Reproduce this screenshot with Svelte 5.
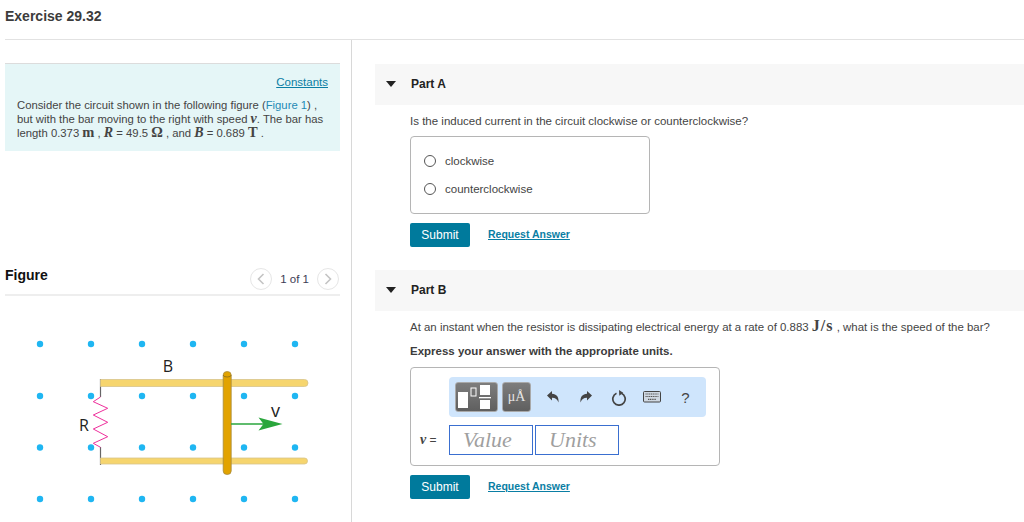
<script>
  const dotX = [40, 91, 142, 193, 244, 295]
  const dotY = [344, 396, 447.5, 499]
  const parts = ['clockwise', 'counterclockwise']
</script>

<div class="page">
  <header class="title">Exercise 29.32</header>

  <div class="columns">
    <aside class="left">
      <div class="intro">
        <a class="constants" href="#c">Constants</a>
        <p>
          Consider the circuit shown in the following figure (<span class="fig-link">Figure 1</span>) ,<br />
          but with the bar moving to the right with speed <b class="var">v</b>. The bar has<br />
          length 0.373 <b class="unit">m</b> , <b class="var">R</b> = 49.5 <b class="unit">Ω</b> , and <b class="var">B</b> = 0.689 <b class="unit">T</b> .
        </p>
      </div>

      <div class="fig-head">
        <h2>Figure</h2>
        <div class="pager">
          <span class="circle">
            <svg width="8" height="12" viewBox="0 0 8 12"><path d="M6.5 1 L1.5 6 L6.5 11" fill="none" stroke="#c4c4c4" stroke-width="1.6"/></svg>
          </span>
          <span class="count">1 of 1</span>
          <span class="circle">
            <svg width="8" height="12" viewBox="0 0 8 12"><path d="M1.5 1 L6.5 6 L1.5 11" fill="none" stroke="#c4c4c4" stroke-width="1.6"/></svg>
          </span>
        </div>
      </div>

      <svg class="figure" width="346" height="226" viewBox="0 296 346 226">
        {#each dotY as y}
          {#each dotX as x}
            <circle cx={x} cy={y} r="3.2" fill="#1fb6f2" />
          {/each}
        {/each}
        <path d="M100.5 379 V397" stroke="#666" stroke-width="1.2" fill="none"/>
        <path d="M100.5 447 V465" stroke="#666" stroke-width="1.2" fill="none"/>
        <path d="M100.5 397 L93.3 401.700 L107.700 408.300 L93.3 415 L107.700 422.300 L93.3 429 L107.700 436.700 L93.3 443.300 L100.5 447.300" stroke="#ee2f9c" stroke-width="1" fill="none"/>
        <path d="M100.5 379.500 H304.500 a3.500 3.500 0 0 1 0 7 H100.5 Z" fill="#f6d56e" stroke="#d8c48a" stroke-width="0.8"/>
        <path d="M100.5 458 H304.500 a3 3 0 0 1 0 6 H100.5 Z" fill="#f6d56e" stroke="#d8c48a" stroke-width="0.8"/>
        <path d="M223.200 375 a4 3.500 0 0 1 8 0 V471 a4 3.500 0 0 1 -8 0 Z" fill="#e2a300" stroke="#a78a3c" stroke-width="0.8"/>
        <path d="M223.200 375 a4 2 0 0 0 8 0" fill="none" stroke="#7d6420" stroke-width="0.7"/>
        <path d="M231 424 H264" stroke="#2aa63c" stroke-width="1.6"/>
        <path d="M282.500 424 L258.500 417.500 L263.500 424 L258.500 430.500 Z" fill="#2aa63c"/>
        <text x="168" y="372" class="label">B</text>
        <text x="84" y="431" class="label">R</text>
        <text x="275.500" y="417" class="label big">v</text>
      </svg>
    </aside>

    <main class="right">
      <section class="part">
        <div class="part-head"><span class="tri"></span><h3>Part A</h3></div>
        <div class="part-body">
          <p class="question">Is the induced current in the circuit clockwise or counterclockwise?</p>
          <div class="choices">
            {#each parts as choice}
              <label class="choice"><span class="radio"></span>{choice}</label>
            {/each}
          </div>
          <div class="actions">
            <button>Submit</button>
            <a href="#r">Request Answer</a>
          </div>
        </div>
      </section>

      <section class="part part-b">
        <div class="part-head"><span class="tri"></span><h3>Part B</h3></div>
        <div class="part-body">
          <p class="question q-b">At an instant when the resistor is dissipating electrical energy at a rate of 0.883 <b class="unit wide">J/s</b> , what is the speed of the bar?</p>
          <p class="express">Express your answer with the appropriate units.</p>
          <div class="answer">
            <div class="toolbar">
              <span class="tool tool-tpl">
                <svg width="38" height="26" viewBox="0 0 38 26">
                  <rect x="0" y="8" width="10" height="16" fill="#fff"/>
                  <rect x="13" y="4" width="5" height="8" fill="none" stroke="#fff" stroke-width="1"/>
                  <rect x="22" y="1" width="10" height="10" fill="#fff"/>
                  <rect x="21" y="13" width="12" height="1.3" fill="#fff"/>
                  <rect x="22" y="16" width="10" height="9" fill="#fff"/>
                </svg>
              </span>
              <span class="tool tool-mu">μÅ</span>
              <div class="tb-icons">
                <span><svg width="14" height="14" viewBox="0 0 14 14"><path d="M1 5.500 L6 1 V3.800 C10.500 4 13 7 12.500 12.500 C11.500 9.500 9.500 7.800 6 7.800 V10.500 Z" fill="#444"/></svg></span>
                <span><svg width="14" height="14" viewBox="0 0 14 14"><path d="M13 5.500 L8 1 V3.800 C3.500 4 1 7 1.500 12.500 C2.500 9.500 4.500 7.800 8 7.800 V10.500 Z" fill="#444"/></svg></span>
                <span><svg width="16" height="17" viewBox="0 0 16 17"><path d="M5.500 4.300 A6.200 6.200 0 1 0 10.500 4.300" fill="none" stroke="#444" stroke-width="1.700"/><path d="M8 1 L12.200 3.800 L8.300 6.800 Z" fill="#444"/></svg></span>
                <span>
                  <svg width="18" height="12" viewBox="0 0 18 12">
                    <rect x="0.500" y="0.500" width="17" height="10.500" rx="1" fill="#cfd8e2" stroke="#444"/>
                    <path d="M2.500 3 H15.500 M2.500 5.500 H15.500 M5 8.300 H13" stroke="#555" stroke-width="1.200" stroke-dasharray="1.200 0.600"/>
                  </svg>
                </span>
                <span class="help">?</span>
              </div>
            </div>
            <div class="entry">
              <span class="v-eq"><b class="var">v</b> =</span>
              <span class="field">Value</span>
              <span class="field">Units</span>
            </div>
          </div>
          <div class="actions">
            <button>Submit</button>
            <a href="#r">Request Answer</a>
          </div>
        </div>
      </section>
    </main>
  </div>
</div>

<style>
  :global(body) {
    margin: 0;
    background: #fff;
  }

  .page {
    width: 1024px;
    height: 522px;
    overflow: hidden;
    font-family: "Liberation Sans", Arial, sans-serif;
    font-size: 11.5px;
    color: #444;
  }

  .title {
    height: 40px;
    margin-left: 5px;
    padding-top: 8px;
    box-sizing: border-box;
    font-size: 14px;
    line-height: 16px;
    font-weight: bold;
    color: #3c3c3c;
    border-bottom: 1px solid #e2e2e2;
  }

  .columns {
    display: flex;
    height: 482px;
  }

  .left {
    width: 352px;
    box-sizing: border-box;
    padding: 23px 11px 0 5px;
    border-right: 1px solid #d8d8d8;
  }

  .intro {
    height: 88px;
    box-sizing: border-box;
    background: #e5f6f7;
    border-top: 1px solid #dcdcdc;
    padding: 11px 12px 0;
    text-align: right;
    line-height: 14px;
  }

  .constants {
    color: #0a7ea4;
    text-decoration: underline;
  }

  .intro p {
    margin: 9px 0 0;
    text-align: left;
    line-height: 14px;
    white-space: nowrap;
    font-size: 11.3px;
  }

  .fig-link {
    color: #1f8ab5;
  }

  .var {
    font-family: "Liberation Serif", serif;
    font-style: italic;
    font-weight: bold;
    font-size: 14px;
    line-height: 1px;
  }

  .unit {
    font-family: "Liberation Serif", serif;
    font-weight: bold;
    font-size: 14.500px;
    line-height: 1px;
  }

  .wide {
    font-size: 16px;
    letter-spacing: 1px;
  }

  .fig-head {
    margin-top: 114px;
    height: 31px;
    display: flex;
    justify-content: space-between;
    border-bottom: 2px solid #eee;
    box-sizing: border-box;
  }

  .fig-head h2 {
    margin: 2px 0 0;
    font-size: 14px;
    line-height: 16px;
    font-weight: bold;
    color: #111;
  }

  .pager {
    display: flex;
    align-items: flex-start;
    gap: 8px;
    margin: 3px 1px 0 0;
  }

  .circle {
    width: 22px;
    height: 22px;
    border: 1px solid #e6e6e6;
    border-radius: 50%;
    box-sizing: border-box;
    display: flex;
    align-items: center;
    justify-content: center;
  }

  .count {
    line-height: 22px;
    color: #3c3c55;
  }

  .figure {
    display: block;
    margin-left: -5px;
  }

  .label {
    font-family: "Open Sans", sans-serif;
    font-size: 16px;
    fill: #222;
    text-anchor: middle;
  }

  .big {
    font-size: 18px;
  }

  .right {
    flex: 1;
    padding: 24px 0 0 23px;
    min-width: 0;
  }

  .part-head {
    height: 41px;
    background: #f7f7f7;
    display: flex;
    align-items: center;
    padding: 0 0 2px 11px;
    box-sizing: border-box;
  }

  .part-head h3 {
    margin: 0 0 0 15px;
    font-size: 12px;
    font-weight: bold;
    color: #222;
  }

  .tri {
    width: 0;
    height: 0;
    border-left: 5.500px solid transparent;
    border-right: 5.500px solid transparent;
    border-top: 6px solid #222;
  }

  .part-body {
    padding-left: 35px;
  }

  .question {
    margin: 0;
    padding-top: 9px;
    line-height: 14px;
  }

  .q-b {
    font-size: 11.450px;
  }

  .choices {
    width: 240px;
    height: 78px;
    box-sizing: border-box;
    margin-top: 8px;
    border: 1px solid #b5b5b5;
    border-radius: 4px;
    padding-top: 10px;
  }

  .choice {
    display: flex;
    align-items: center;
    height: 28px;
    padding-left: 13px;
    gap: 9px;
    font-size: 11.500px;
  }

  .radio {
    width: 12px;
    height: 12px;
    box-sizing: border-box;
    border: 1.3px solid #555;
    border-radius: 50%;
  }

  .actions {
    display: flex;
    align-items: flex-start;
    gap: 18px;
    margin-top: 9px;
  }

  .actions button {
    width: 60px;
    height: 24px;
    padding: 0;
    border: 0;
    border-radius: 2px;
    background: #007a9c;
    color: #fff;
    font: 12px "Liberation Sans", Arial, sans-serif;
  }

  .actions a {
    font-size: 10.500px;
    line-height: 22px;
    font-weight: bold;
    color: #0a7ea4;
    text-decoration: underline;
  }

  .part-b {
    margin-top: 23px;
  }

  .express {
    margin: 10px 0 0;
    line-height: 14px;
    font-weight: bold;
    color: #3c3c3c;
  }

  .answer {
    width: 310px;
    height: 99px;
    box-sizing: border-box;
    margin-top: 9px;
    border: 1px solid #b5b5b5;
    border-radius: 4px;
    padding: 9px 14px 0 38px;
  }

  .toolbar {
    height: 40px;
    width: 257px;
    background: #cfe5fc;
    border-radius: 4px;
    display: flex;
    align-items: center;
    padding-left: 6px;
    box-sizing: border-box;
    gap: 4px;
  }

  .tool {
    height: 30px;
    border-radius: 3px;
    background: linear-gradient(#7d7d7d, #5f5f5f);
    border: 1px solid #a9a9a9;
    box-sizing: border-box;
    display: flex;
    align-items: center;
    justify-content: center;
    color: #e6e6e6;
  }

  .tool-tpl {
    width: 43px;
  }

  .tool-mu {
    width: 29px;
    font-family: "Liberation Serif", serif;
    font-size: 14px;
  }

  .tb-icons {
    display: grid;
    grid-template-columns: repeat(5, 33.200px);
    align-items: center;
    justify-items: center;
    margin-left: 1px;
  }

  .tb-icons span {
    display: flex;
  }

  .help {
    font-size: 15px;
    color: #444;
  }

  .entry {
    display: flex;
    align-items: center;
    margin: 8px 0 0 -29px;
    gap: 2px;
  }

  .v-eq {
    width: 27px;
    font-size: 12px;
    white-space: nowrap;
  }

  .field {
    width: 84px;
    height: 30px;
    box-sizing: border-box;
    border: 1px solid #3a6fd0;
    padding-left: 13px;
    font-family: "Liberation Serif", serif;
    font-style: italic;
    font-size: 22px;
    line-height: 28px;
    color: #9f9f9f;
  }
</style>
